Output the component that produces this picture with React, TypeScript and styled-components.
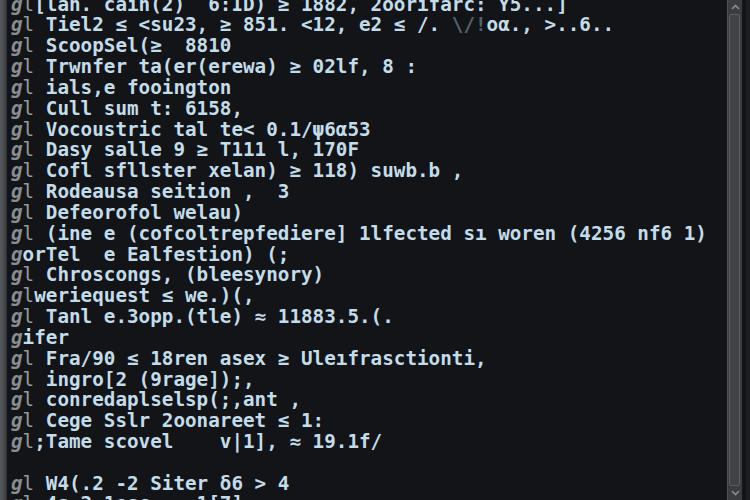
import React from 'react';
import styled, { createGlobalStyle } from 'styled-components';

const Global = createGlobalStyle`
  html, body { margin: 0; padding: 0; background: #131418; }
  body { width: 750px; height: 500px; overflow: hidden; }
`;

const Screen = styled.div`
  display: flex;
  width: 750px;
  height: 500px;
  overflow: hidden;
  background: #131418;
`;

const Edge = styled.div`
  width: 7px;
  flex: none;
  background: linear-gradient(90deg, #58595d 0%, #45464a 70%, #2a2b2f 100%);
`;

const Term = styled.div`
  flex: 1;
  min-width: 0;
  overflow: hidden;
  padding-left: 4px;
`;

const Lines = styled.div`
  margin-top: -5.4px;
  font-family: "DejaVu Sans Mono", "Liberation Mono", monospace;
  font-weight: 700;
  font-size: 19.27px;
  line-height: 20.83px;
  white-space: pre;
  color: #c3dcea;
`;

const Row = styled.div`
  height: 20.83px;
`;

const Gut = styled.span`
  color: #8b8d90;
  font-style: italic;
`;

const Bar = styled.span`
  color: #979a9d;
  font-weight: 400;
`;

const Dim = styled.span`
  color: #56626a;
`;

const Scroll = styled.div`
  width: 14px;
  flex: none;
  margin-right: 4px;
  display: flex;
  flex-direction: column;
  background: #3a3c40;
  border-left: 1px solid #505256;
`;

const Arrow = styled.div`
  height: 14px;
  flex: none;
  display: flex;
  align-items: center;
  justify-content: center;
`;

const Thumb = styled.div`
  flex: 1;
  margin: 0 2px 0 1px;
  border: 1px solid #5b5d61;
  border-radius: 2px;
  background: #404246;
`;

const RightEdge = styled.div`
  width: 4px;
  flex: none;
  background: #1d1e21;
`;

type Seg = string | { dim: string };
type Line = { kind: 'bar' | 'plain' | 'empty'; segs: Seg[] };

const L = (kind: Line['kind'], ...segs: Seg[]): Line => ({ kind, segs });

const lines: Line[] = [
  L('bar', '[lan. cain(2)  6:ID) ≥ 1882, 2oorifarc: Y5...]'),
  L('bar', ' Tiel2 ≤ <su23, ≥ 851. <12, e2 ≤ /. ', { dim: '\\/!' }, 'oα., >..6..'),
  L('bar', ' ScoopSel(≥  8810'),
  L('bar', ' Trwnfer ta(er(erewa) ≥ 02lf, 8 :'),
  L('bar', ' ials,e fooington'),
  L('bar', ' Cull sum t: 6158,'),
  L('bar', ' Vocoustric tal te< 0.1/ψ6α53'),
  L('bar', ' Dasy salle 9 ≥ T111 l, 170F'),
  L('bar', ' Cofl sfllster xelan) ≥ 118) suwb.b ,'),
  L('bar', ' Rodeausa seition ,  3'),
  L('bar', ' Defeorofol welau)'),
  L('bar', ' (ine e (cofcoltrepfediere] 1lfected sı woren (4256 nf6 1)'),
  L('plain', 'orTel  e Ealfestion) (;'),
  L('bar', ' Chroscongs, (bleesynory)'),
  L('bar', 'weriequest ≤ we.)(,'),
  L('bar', ' Tanl e.3opp.(tle) ≈ 11883.5.(.'),
  L('plain', 'ifer'),
  L('bar', ' Fra/90 ≤ 18ren asex ≥ Uleıfrasctionti,'),
  L('bar', ' ingro[2 (9rage]);,'),
  L('bar', ' conredaplselsp(;,ant ,'),
  L('bar', ' Cege Sslr 2oonareet ≤ 1:'),
  L('bar', ';Tame scovel    v|1], ≈ 19.1f/'),
  L('empty'),
  L('bar', ' W4(.2 -2 Siter δ6 > 4'),
  L('bar', ' 4s 2 1esc   .1[7],'),
];

const Chevron: React.FC<{ down?: boolean }> = ({ down }) => (
  <svg width="9" height="6" viewBox="0 0 9 6">
    <path
      d={down ? 'M1 1 L4.5 4.5 L8 1' : 'M1 5 L4.5 1.5 L8 5'}
      fill="none"
      stroke="#8a8c90"
      strokeWidth="1.6"
    />
  </svg>
);

export default function App() {
  return (
    <>
      <Global />
      <Screen>
        <Edge />
        <Term>
          <Lines>
            {lines.map((ln, i) => (
              <Row key={i}>
                {ln.kind !== 'empty' && <Gut>g</Gut>}
                {ln.kind === 'bar' && <Bar>l</Bar>}
                {ln.segs.map((s, j) =>
                  typeof s === 'string' ? (
                    <React.Fragment key={j}>{s}</React.Fragment>
                  ) : (
                    <Dim key={j}>{s.dim}</Dim>
                  )
                )}
              </Row>
            ))}
          </Lines>
        </Term>
        <Scroll>
          <Arrow>
            <Chevron />
          </Arrow>
          <Thumb />
          <Arrow>
            <Chevron down />
          </Arrow>
        </Scroll>
        <RightEdge />
      </Screen>
    </>
  );
}
